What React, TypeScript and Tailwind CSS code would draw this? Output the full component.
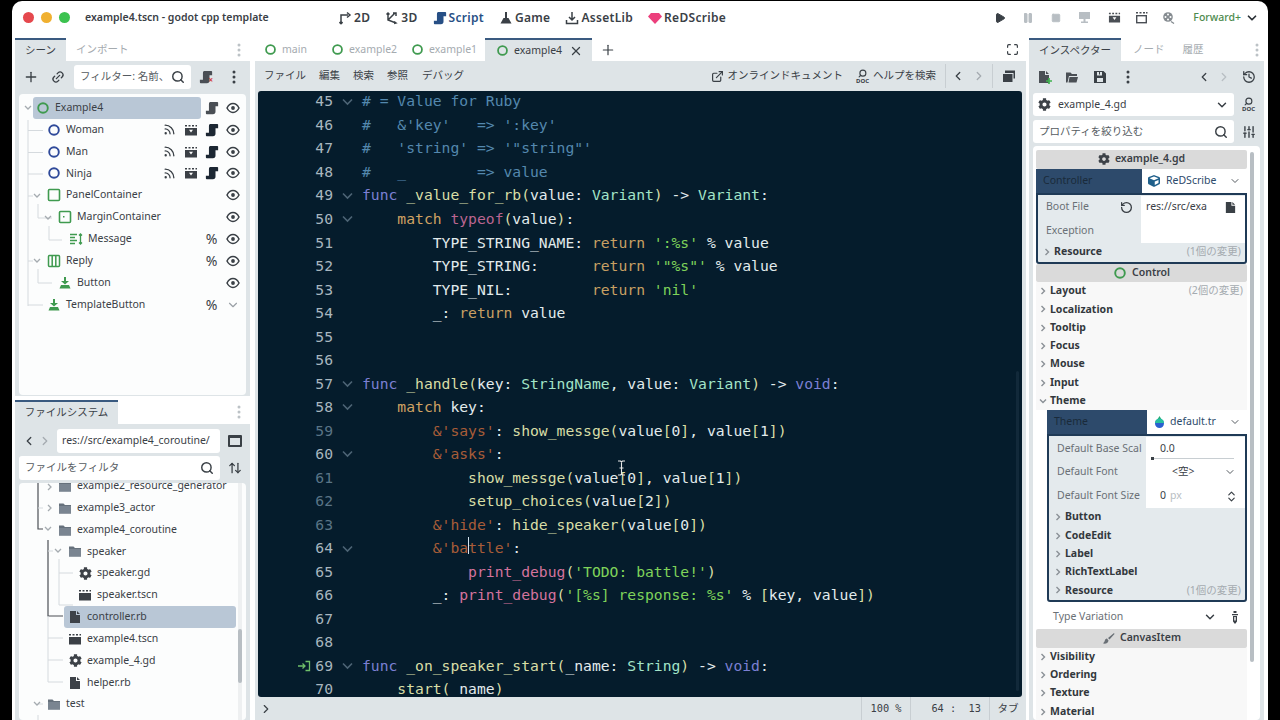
import React from 'react';
import { FaCog, FaCube } from 'react-icons/fa';
import { Plus, Link2, Search, ChevronDown, ChevronLeft, ChevronRight, X, Rss, Play, Pause, Square, RotateCcw, History, ExternalLink, Maximize, ChevronsUpDown, ArrowUpDown, SlidersVertical } from 'lucide-react';

const ui = "font-['Noto_Sans','Noto_Sans_CJK_JP',sans-serif]";

const Ring = ({ c = '#3f9a4f', s = 14 }: { c?: string; s?: number }) => (
  <svg width={s} height={s} viewBox="0 0 14 14" className="shrink-0"><circle cx="7" cy="7" r="4.8" fill="none" stroke={c} strokeWidth="1.9" /></svg>
);
const ScriptIcon = ({ c = '#1c2733', s = 14 }: { c?: string; s?: number }) => (
  <svg width={s} height={s} viewBox="0 0 16 16" className="shrink-0"><path fill={c} d="M6 1h8a1 1 0 0 1 1 1v4h-3v6a3 3 0 0 1-3 3H2a1 1 0 0 1-1-1v-3h3.5V3A2 2 0 0 1 6 1z" /></svg>
);
const EyeIcon = () => (
  <svg width="14" height="14" viewBox="0 0 14 14" className="shrink-0"><path d="M1 7c1.5-3 3.5-4.4 6-4.4S11.500 4 13 7c-1.500 3-3.500 4.400-6 4.400S2.500 10 1 7z" fill="none" stroke="#3a4046" strokeWidth="1.500" /><circle cx="7" cy="7" r="1.900" fill="#3a4046" /></svg>
);
const Clapper = ({ c = '#3b4046', s = 14, play = true }: { c?: string; s?: number; play?: boolean }) => (
  <svg width={s} height={s} viewBox="0 0 14 14" className="shrink-0">
    <path fill={c} d="M1 2h2v1.500H1zM4.500 2h2v1.500h-2zM8 2h2v1.500H8zM11.500 2h1.500v1.500h-1.500zM1 5h12v7.500H1z" />
    {play && <path fill="#fff" d="M5 6.800h4l-2 2.800z" />}
  </svg>
);
const FolderIcon = () => (
  <svg width="14" height="14" viewBox="0 0 14 14" className="shrink-0"><path fill="#66717c" d="M1 2.500h4.500L7 4h6v8.500H1z" /><path fill="#7a8591" d="M1 5h12v7.500H1z" /></svg>
);
const FileIcon = ({ c = '#3d4248', s = 14 }: { c?: string; s?: number }) => (
  <svg width={s} height={s} viewBox="0 0 14 14" className="shrink-0"><path fill={c} d="M2 1h6v4h4v8H2zM9 1l3 3H9z" /></svg>
);
const Gear = ({ s = 13, c = '#3d4248' }: { s?: number; c?: string }) => <FaCog size={s} color={c} className="shrink-0" />;
const Vd = () => (
  <svg width="4" height="14" viewBox="0 0 4 14" className="shrink-0"><circle cx="2" cy="2" r="1.500" fill="#bcc2c6" /><circle cx="2" cy="7" r="1.500" fill="#bcc2c6" /><circle cx="2" cy="12" r="1.500" fill="#bcc2c6" /></svg>
);
const VdDark = () => (
  <svg width="4" height="14" viewBox="0 0 4 14" className="shrink-0"><circle cx="2" cy="2" r="1.500" fill="#3a4046" /><circle cx="2" cy="7" r="1.500" fill="#3a4046" /><circle cx="2" cy="12" r="1.500" fill="#3a4046" /></svg>
);
const Caret = ({ open = false }: { open?: boolean }) => (
  <svg width="8" height="8" viewBox="0 0 8 8" className="shrink-0">{open ? <path d="M1 2.500 4 5.500 7 2.500" fill="none" stroke="#8a9096" strokeWidth="1.400" /> : <path d="M2.500 1 5.500 4 2.500 7" fill="none" stroke="#8a9096" strokeWidth="1.400" />}</svg>
);
const BoxIcon = ({ dot = false }: { dot?: boolean }) => (
  <svg width="14" height="14" viewBox="0 0 14 14" className="shrink-0"><rect x="1.500" y="1.500" width="11" height="11" rx="1" fill="none" stroke="#3f9a4f" strokeWidth="1.600" />{dot && <rect x="5" y="6" width="1.500" height="1.500" fill="#3f9a4f" />}</svg>
);
const MsgIcon = () => (
  <svg width="14" height="14" viewBox="0 0 14 14" className="shrink-0"><path d="M1 2.500h7M1 5.500h5M1 8.500h7M1 11.500h5M11.500 2v10M10 3.500l1.500-1.500 1.500 1.500M10 10.500l1.500 1.500 1.500-1.500" stroke="#3f9a4f" strokeWidth="1.300" fill="none" /></svg>
);
const HBoxIcon = () => (
  <svg width="14" height="14" viewBox="0 0 14 14" className="shrink-0"><rect x="1.500" y="1.500" width="11" height="11" rx="1" fill="none" stroke="#3f9a4f" strokeWidth="1.500" /><path d="M5.200 2v10M8.800 2v10" stroke="#3f9a4f" strokeWidth="1.500" /></svg>
);
const BtnIcon = () => (
  <svg width="14" height="14" viewBox="0 0 14 14" className="shrink-0"><path fill="#3f9a4f" d="M6 1h2v4h3L7 8.500 3 5h3zM3 9h8l1.500 3.500h-11z" /></svg>
);

type SRow = { name: string; pad: string; icon: React.ReactNode; slots: React.ReactNode[]; sel?: boolean; };
const eye = <EyeIcon />;
const pct = <span className="text-[14px] leading-none text-[#3a4046]">%</span>;
const rss = <Rss size={13} color="#3a4046" strokeWidth={2.400} />;
const clap = <Clapper />;
const scr = <ScriptIcon />;
const sceneRows: SRow[] = [
  { name: 'Example4', pad: 'pl-[3px]', icon: <Ring />, slots: [<ScriptIcon c="#4a4f55" />, eye], sel: true },
  { name: 'Woman', pad: 'pl-[28px]', icon: <Ring c="#2f4a9a" />, slots: [rss, clap, scr, eye] },
  { name: 'Man', pad: 'pl-[28px]', icon: <Ring c="#2f4a9a" />, slots: [rss, clap, scr, eye] },
  { name: 'Ninja', pad: 'pl-[28px]', icon: <Ring c="#2f4a9a" />, slots: [rss, clap, scr, eye] },
  { name: 'PanelContainer', pad: 'pl-[28px]', icon: <BoxIcon />, slots: [null, null, null, eye] },
  { name: 'MarginContainer', pad: 'pl-[39px]', icon: <BoxIcon dot />, slots: [null, null, null, eye] },
  { name: 'Message', pad: 'pl-[50px]', icon: <MsgIcon />, slots: [null, null, pct, eye] },
  { name: 'Reply', pad: 'pl-[28px]', icon: <HBoxIcon />, slots: [null, null, pct, eye] },
  { name: 'Button', pad: 'pl-[39px]', icon: <BtnIcon />, slots: [null, null, null, eye] },
  { name: 'TemplateButton', pad: 'pl-[28px]', icon: <BtnIcon />, slots: [null, null, pct, <ChevronDown size={14} color="#9aa0a6" />] },
];

const SceneTree = () => (
  <div className="relative h-[301px] mx-1 mt-[2px] bg-[#fcfdfd] rounded-sm overflow-hidden">
    <svg width="229" height="301" viewBox="0 0 229 301" className="absolute left-0 top-0" fill="none">
      <path d="M9 26V212M9 36.500H24M9 58.500H24M9 80H24M9 102H14M9 167H14M9 211H24M19 110V124H33M30 132V146H43M19 175V189H33" stroke="#d5dade" strokeWidth="1" />
      <path d="M6 12l3 3 3-3M15 100l3 3 3-3M26 122l3 3 3-3M15 165l3 3 3-3" stroke="#a5abb0" strokeWidth="1.300" />
    </svg>
    <div className="relative pt-[3px]">
      {sceneRows.map((r) => (
        <div key={r.name} className={`flex items-center h-[21.850px] pr-[3px] ${r.sel ? 'pl-[14px]' : r.pad}`}>
          <div className={`flex items-center flex-1 min-w-0 h-full gap-[5px] ${r.sel ? 'bg-[#b9c7d6] rounded-[3px] pl-[3px]' : ''}`}>
            {r.icon}
            <span className="text-[10.500px] text-[#3a4046]">{r.name}</span>
          </div>
          {r.slots.map((s, i) => (
            <div key={i} className="w-[21px] flex items-center justify-center shrink-0">{s}</div>
          ))}
        </div>
      ))}
    </div>
  </div>
);

type FRow = { name: string; pad: string; icon: React.ReactNode; sel?: boolean };
const fileRows: FRow[] = [
  { name: 'example2_resource_generator', pad: 'pl-[39px]', icon: <FolderIcon /> },
  { name: 'example3_actor', pad: 'pl-[39px]', icon: <FolderIcon /> },
  { name: 'example4_coroutine', pad: 'pl-[39px]', icon: <FolderIcon /> },
  { name: 'speaker', pad: 'pl-[49px]', icon: <FolderIcon /> },
  { name: 'speaker.gd', pad: 'pl-[60px]', icon: <Gear /> },
  { name: 'speaker.tscn', pad: 'pl-[59px]', icon: <Clapper play={false} /> },
  { name: 'controller.rb', pad: 'pl-[49px]', icon: <FileIcon />, sel: true },
  { name: 'example4.tscn', pad: 'pl-[49px]', icon: <Clapper play={false} /> },
  { name: 'example_4.gd', pad: 'pl-[50px]', icon: <Gear /> },
  { name: 'helper.rb', pad: 'pl-[49px]', icon: <FileIcon /> },
  { name: 'test', pad: 'pl-[28px]', icon: <FolderIcon /> },
];
const FileTree = () => (
  <div className="relative flex-1 min-h-0 mx-1 mt-[3px] bg-[#fcfdfd] rounded-sm overflow-hidden">
    <div className="relative -mt-[8px]">
      {fileRows.map((r) => (
        <div key={r.name} className={`flex items-center h-[21.850px] ${r.sel ? 'pl-[45px]' : r.pad}`}>
          <div className={`flex items-center h-full gap-[5px] ${r.sel ? 'bg-[#b9c7d6] rounded-[3px] w-[172px] pl-[4px]' : ''}`}>
            {r.icon}
            <span className="text-[10.500px] text-[#3a4046] whitespace-nowrap">{r.name}</span>
          </div>
        </div>
      ))}
    </div>
    <svg width="229" height="237" viewBox="0 0 229 237" className="absolute left-0 top-0" fill="none">
      <path d="M19 0V46H24M29 57V133H44" stroke="#4a4f55" strokeWidth="1.200" />
      <path d="M19 25H24M29 68H34M40 76V122H54M40 90H54M29 155H44M29 133V199H44M29 177H44M19 221H24M19 232V237" stroke="#d5dade" strokeWidth="1" />
      <path d="M29 1l3 3-3 3M29 22l3 3-3 3M26 44l3 3 3-3M36 66l3 3 3-3M15 219l3 3 3-3" stroke="#a5abb0" strokeWidth="1.300" />
    </svg>
    <div className="absolute right-[4px] top-[146px] w-[4px] h-[54px] rounded bg-[#b8bec3]" />
    <div className="absolute right-[4px] top-0 bottom-0 w-[4px] bg-[#b8bec3]/20" />
  </div>
);

const C = {
  cm: 'text-[#5488ae]', kw: 'text-[#7c80d4]', fn: 'text-[#d8dea6]', tx: 'text-[#e2ebec]', ty: 'text-[#a3e4c8]', ct: 'text-[#d0a263]',
  bi: 'text-[#bb6590]', st: 'text-[#7fd35a]', sn: 'text-[#a85c38]', pk: 'text-[#d4739d]', or: 'text-[#c9a063]',
};
type T = [string, string];
const L: { n: number; dim?: boolean; fold?: boolean; mark?: boolean; t: T[]; caret?: boolean }[] = [
  { n: 45, fold: true, t: [[C.cm, "# = Value for Ruby"]] },
  { n: 46, t: [[C.cm, "#   &'key'   => ':key'"]] },
  { n: 47, t: [[C.cm, `#   'string' => '"string"'`]] },
  { n: 48, t: [[C.cm, "#   _        => value"]] },
  { n: 49, fold: true, t: [[C.kw, 'func '], [C.fn, '_value_for_rb'], [C.tx, '(value: '], [C.ty, 'Variant'], [C.tx, ') -> '], [C.ty, 'Variant'], [C.tx, ':']] },
  { n: 50, fold: true, t: [[C.ct, '    match '], [C.bi, 'typeof'], [C.tx, '(value):']] },
  { n: 51, t: [[C.tx, '        TYPE_STRING_NAME: '], [C.or, 'return '], [C.st, "':%s'"], [C.tx, ' % value']] },
  { n: 52, t: [[C.tx, '        TYPE_STRING:      '], [C.or, 'return '], [C.st, `'"%s"'`], [C.tx, ' % value']] },
  { n: 53, t: [[C.tx, '        TYPE_NIL:         '], [C.or, 'return '], [C.st, "'nil'"]] },
  { n: 54, t: [[C.tx, '        _: '], [C.or, 'return '], [C.tx, 'value']] },
  { n: 55, t: [] },
  { n: 56, t: [] },
  { n: 57, fold: true, t: [[C.kw, 'func '], [C.fn, '_handle'], [C.tx, '(key: '], [C.ty, 'StringName'], [C.tx, ', value: '], [C.ty, 'Variant'], [C.tx, ') -> '], [C.kw, 'void'], [C.tx, ':']] },
  { n: 58, fold: true, t: [[C.ct, '    match '], [C.tx, 'key:']] },
  { n: 59, dim: true, t: [[C.sn, "        &'says'"], [C.tx, ': '], [C.fn, 'show_messge'], [C.tx, '(value[0], value[1])']] },
  { n: 60, fold: true, t: [[C.sn, "        &'asks'"], [C.tx, ':']] },
  { n: 61, dim: true, t: [[C.fn, '            show_messge'], [C.tx, '(value[0], value[1])']] },
  { n: 62, dim: true, t: [[C.fn, '            setup_choices'], [C.tx, '(value[2])']] },
  { n: 63, dim: true, t: [[C.sn, "        &'hide'"], [C.tx, ': '], [C.fn, 'hide_speaker'], [C.tx, '(value[0])']] },
  { n: 64, fold: true, caret: true, t: [[C.sn, "ttle'"], [C.tx, ':']] },
  { n: 65, t: [[C.pk, '            print_debug'], [C.tx, '('], [C.st, "'TODO: battle!'"], [C.tx, ')']] },
  { n: 66, t: [[C.tx, '        _: '], [C.pk, 'print_debug'], [C.tx, '('], [C.st, "'[%s] response: %s'"], [C.tx, ' % [key, value])']] },
  { n: 67, t: [] },
  { n: 68, t: [] },
  { n: 69, fold: true, mark: true, t: [[C.kw, 'func '], [C.fn, '_on_speaker_start'], [C.tx, '(_name: '], [C.ty, 'String'], [C.tx, ') -> '], [C.kw, 'void'], [C.tx, ':']] },
  { n: 70, t: [[C.fn, '    start'], [C.tx, '(_name)']] },
];

const Tok = ({ c, t }: { c: string; t: string }) => {
  if (c !== C.tx) return <span className={c}>{t}</span>;
  return (
    <>
      {t.split(/([()\[\]])/).map((p, i) => (
        <span key={i} className={/^[()\[\]]$/.test(p) ? 'text-[#d8dea6]' : c}>{p}</span>
      ))}
    </>
  );
};

const Editor = () => (
  <div className="relative flex-1 min-h-0 bg-[#051c2c] rounded-[3px] overflow-hidden font-['DejaVu_Sans_Mono',monospace] text-[14.700px]">
    <div className="-mt-[1px]">
      {L.map((l) => (
        <div key={l.n} className="flex items-center h-[23.520px] whitespace-pre leading-none">
          <div className={`relative w-[75px] text-right shrink-0 ${l.dim ? 'text-[#5a7486]' : 'text-[#a8b6bf]'}`}>
            {l.mark && (
              <svg width="14" height="12" viewBox="0 0 14 12" className="absolute left-[39px] top-[1px]" fill="none" stroke="#6fbf6a" strokeWidth="1.300"><path d="M1 6h7M5.500 3.500 8 6 5.500 8.500M8.500 1.500H12.500V10.500H8.500" /></svg>
            )}
            {l.n}
          </div>
          <div className="w-[29px] flex justify-center shrink-0">
            {l.fold && <svg width="11" height="8" viewBox="0 0 11 8" fill="none" stroke="#4d6475" strokeWidth="1.600"><path d="M1 1.500 5.500 6 10 1.500" /></svg>}
          </div>
          <div>
            {l.caret && (
              <>
                <span className={C.sn}>{"        &'ba"}</span>
                <span className="relative"><span className="absolute -left-[0.500px] -top-[2px] h-[17px] w-[1px] bg-[#d5e4f0]" /></span>
              </>
            )}
            {l.t.map((s, i) => <Tok key={i} c={s[0]} t={s[1]} />)}
          </div>
        </div>
      ))}
    </div>
    <div className="absolute right-[3px] top-[280px] h-[320px] w-[3px] rounded bg-[#12293a]" />
    <svg width="9" height="16" viewBox="0 0 9 16" className="absolute left-[359px] top-[369px]" fill="none" stroke="#e8e8e8" strokeWidth="1.100"><path d="M1 1h2.500L4.500 2l1-1H8M4.500 2v12M1 15h2.500l1-1 1 1H8M2.500 8h4" /></svg>
  </div>
);

const NavBtn = ({ icon, label, cls = 'text-[#3a4046]' }: { icon: React.ReactNode; label: string; cls?: string }) => (
  <div className={`flex items-center gap-[2px] font-semibold text-[12px] tracking-[0.300px] ${cls}`}>{icon}<span>{label}</span></div>
);

const TopBar = () => (
  <div className="relative flex items-center h-[37px] pb-[4px] shrink-0">
    <div className="flex items-center gap-[7px] pl-[8px]">
      <span className="w-[11px] h-[11px] rounded-full bg-[#e5484d]" />
      <span className="w-[11px] h-[11px] rounded-full bg-[#f0b030]" />
      <span className="w-[11px] h-[11px] rounded-full bg-[#3cc24f]" />
    </div>
    <span className="ml-[15px] w-[253px] text-[10.500px] font-semibold text-[#3a4046] whitespace-nowrap">example4.tscn - godot cpp template</span>
    <div className="flex items-center gap-[15px]">
      <NavBtn label="2D" icon={<svg width="14" height="14" viewBox="0 0 14 14" fill="none" stroke="#3a4046" strokeWidth="1.500"><path d="M3 13V4h7M3 13l-1.500-2M3 13l1.500-2M9 1.500 12 4 9 6.500" /></svg>} />
      <NavBtn label="3D" icon={<svg width="14" height="14" viewBox="0 0 14 14" fill="none" stroke="#3a4046" strokeWidth="1.500"><path d="M3 2v7l8 3M1.500 3.500 3 2l1.500 1.500M3 9l7-7M8 2h3v3M9 10.500l2 1.500-2 .5" /></svg>} />
      <NavBtn label="Script" cls="text-[#274f85]" icon={<ScriptIcon c="#274f85" />} />
      <NavBtn label="Game" icon={<svg width="14" height="14" viewBox="0 0 14 14"><path fill="#3a4046" d="M6 1h2v6h1.500l3 5.500h-11l3-5.500H6z" /></svg>} />
      <NavBtn label="AssetLib" icon={<svg width="14" height="14" viewBox="0 0 14 14" fill="none" stroke="#3a4046" strokeWidth="1.500"><path d="M7 1v8M4 6l3 3 3-3M1.500 9v3.500h11V9" /></svg>} />
      <NavBtn label="ReDScribe" icon={<svg width="14" height="14" viewBox="0 0 14 14"><path fill="#ec3f7c" d="M3 2h8l3 3.500L7 13 0 5.500z" /></svg>} />
    </div>
    <div className="flex items-center ml-auto pr-[9px]">
      <div className="w-[28px] flex justify-center"><Play size={12} fill="#3a4046" color="#3a4046" /></div>
      <div className="w-[28px] flex justify-center"><Pause size={12} fill="#b8bec3" color="#b8bec3" /></div>
      <div className="w-[28px] flex justify-center"><Square size={10} fill="#b8bec3" color="#b8bec3" /></div>
      <div className="w-[28px] flex justify-center"><svg width="13" height="13" viewBox="0 0 13 13"><path fill="#b8bec3" d="M1 1h11v7H1zM5.500 8h2v2.500H10V12H3v-1.500h2.500z" /></svg></div>
      <div className="ml-[1px] w-[30px] flex justify-center"><Clapper c="#4a4f55" s={13} /></div>
      <div className="w-[24px] flex justify-center"><svg width="13" height="13" viewBox="0 0 13 13"><path fill="#4a4f55" d="M1 1h2v1.500H1zM4.500 1h2v1.500h-2zM8 1h2v1.500H8zM11 1h1.500v1.500H11z" /><rect x="1.700" y="4.700" width="9.600" height="7" fill="none" stroke="#4a4f55" strokeWidth="1.400" /></svg></div>
      <div className="w-[30px] flex justify-center"><svg width="13" height="13" viewBox="0 0 13 13"><circle cx="6" cy="6" r="4.800" fill="#858b90" /><circle cx="6" cy="3.500" r="1" fill="#fff" /><circle cx="6" cy="8.500" r="1" fill="#fff" /><circle cx="3.500" cy="6" r="1" fill="#fff" /><circle cx="8.500" cy="6" r="1" fill="#fff" /><path d="M9 10.500l3 2" stroke="#858b90" strokeWidth="1.300" /></svg></div>
      <span className="ml-[10px] text-[10.500px] font-medium text-[#4d8a4d]">Forward+</span>
      <ChevronDown size={14} color="#2a3036" strokeWidth={3} className="ml-[4px]" />
    </div>
  </div>
);

const Tab = ({ label, active, cls = '' }: { label: string; active?: boolean; cls?: string }) => (
  <div className={`h-full flex items-center text-[10.500px] ${active ? 'bg-[#dee4e7] border-t-2 border-[#3a5a80] text-[#3a4046]' : 'text-[#a5abb0]'} ${cls}`}>{label}</div>
);

const Field = ({ text, cls }: { text: string; cls: string }) => (
  <div className={`flex items-center justify-between bg-white rounded-[3px] text-[10.500px] text-[#555b61] whitespace-nowrap overflow-hidden ${cls}`}>
    <span>{text}</span>
    <Search size={14} color="#3a4046" strokeWidth={2.500} className="shrink-0" />
  </div>
);

const DocIcon = () => (
  <span className="flex flex-col items-center leading-none text-[#3a4046]"><Search size={9} strokeWidth={3} className="-scale-x-100" /><span className="text-[6px] font-bold">DOC</span></span>
);

const LeftDock = () => (
  <div className="w-[235px] shrink-0 flex flex-col">
    <div className="flex items-center h-[23px] shrink-0">
      <Tab label="シーン" active cls="w-[51px] justify-center" />
      <Tab label="インポート" cls="ml-[10px]" />
      <div className="ml-auto mr-[9px]"><Vd /></div>
    </div>
    <div className="h-[335px] shrink-0 bg-[#dee4e7] flex flex-col">
      <div className="flex items-center h-[31px] shrink-0 pl-[8px]">
        <Plus size={16} color="#3a4046" strokeWidth={2} />
        <Link2 size={14} color="#3a4046" strokeWidth={2.200} className="ml-[12px] -rotate-45" />
        <Field text="フィルター: 名前、" cls="ml-[9px] w-[117px] h-[24px] pl-[6px] pr-[6px]" />
        <span className="ml-[8px] relative"><ScriptIcon c="#4a4f55" /><span className="absolute right-0 bottom-0 text-[8px] leading-none text-[#d03a3a] font-bold">×</span></span>
        <span className="ml-[19px]"><VdDark /></span>
      </div>
      <SceneTree />
    </div>
    <div className="h-[4px] shrink-0" />
    <div className="flex items-center h-[24px] shrink-0">
      <Tab label="ファイルシステム" active cls="w-[103px] justify-center" />
      <div className="ml-auto mr-[9px]"><Vd /></div>
    </div>
    <div className="flex-1 min-h-0 bg-[#dee4e7] flex flex-col">
      <div className="flex items-center h-[24px] mt-[5px] shrink-0 pl-[7px]">
        <ChevronLeft size={14} color="#3a4046" strokeWidth={2.200} />
        <ChevronRight size={14} color="#a5abb0" strokeWidth={2.200} className="ml-[2px]" />
        <div className="ml-[5px] w-[163px] h-full bg-white rounded-[3px] flex items-center pl-[5px] text-[10.500px] text-[#3a4046] whitespace-nowrap overflow-hidden">res://src/example4_coroutine/</div>
        <div className="ml-[8px] w-[14px] h-[12px] border-2 border-t-[3px] border-[#3a4046] rounded-[1px]" />
      </div>
      <div className="flex items-center h-[24px] mt-[3px] shrink-0 pl-[4px]">
        <Field text="ファイルをフィルタ" cls="w-[201px] h-[24px] pl-[6px] pr-[6px]" />
        <ArrowUpDown size={14} color="#3a4046" strokeWidth={2.200} className="ml-[8px]" />
      </div>
      <FileTree />
    </div>
  </div>
);

const CenterTab = ({ label, cls = '' }: { label: string; cls?: string }) => (
  <div className={`flex items-center gap-[5px] text-[10.500px] text-[#a5abb0] ${cls}`}><Ring s={13} /><span>{label}</span></div>
);

const Center = () => (
  <div className="flex-1 min-w-0 flex flex-col ml-[5px]">
    <div className="flex items-center h-[23px] shrink-0 pl-[9px]">
      <CenterTab label="main" cls="w-[67px]" />
      <CenterTab label="example2" cls="w-[80px]" />
      <CenterTab label="example1" cls="w-[74px]" />
      <div className="h-full w-[107px] bg-[#dee4e7] border-t-2 border-[#3a5a80] flex items-center pl-[11px] gap-[5px] text-[10.500px] text-[#3a4046]"><Ring s={13} /><span>example4</span><X size={14} color="#3a4046" strokeWidth={2.200} className="ml-[2px]" /></div>
      <Plus size={16} color="#3a4046" strokeWidth={1.800} className="ml-[8px]" />
      <Maximize size={13} color="#3a4046" strokeWidth={2.200} className="ml-auto mr-[7px]" />
    </div>
    <div className="flex-1 min-h-0 bg-[#dee4e7] flex flex-col">
      <div className="flex items-center h-[30px] shrink-0 pl-[9px] pr-[10px] text-[10.500px] text-[#3a4046]">
        <span>ファイル</span>
        <span className="ml-[13px]">編集</span>
        <span className="ml-[13px]">検索</span>
        <span className="ml-[13px]">参照</span>
        <span className="ml-[14px]">デバッグ</span>
        <div className="ml-auto flex items-center h-full">
          <ExternalLink size={13} color="#3a4046" strokeWidth={2.200} />
          <span className="ml-[4px]">オンラインドキュメント</span>
          <span className="ml-[13px]"><DocIcon /></span>
          <span className="ml-[4px]">ヘルプを検索</span>
          <span className="ml-[9px] w-px h-[24px] bg-[#c8ced2]" />
          <ChevronLeft size={14} color="#3a4046" strokeWidth={2.200} className="ml-[5px]" />
          <ChevronRight size={14} color="#a5abb0" strokeWidth={2.200} className="ml-[7px]" />
          <span className="ml-[6px] w-px h-[24px] bg-[#c8ced2]" />
          <svg width="14" height="14" viewBox="0 0 14 14" className="ml-[9px]"><path fill="#3a4046" d="M3 1.500h10v8h-1.500V4H3zM1 5h9.500v8H1z" /></svg>
        </div>
      </div>
      <div className="flex-1 min-h-0 ml-[3px] mr-[4px] flex flex-col">
        <Editor />
      </div>
      <div className="flex items-center h-[23px] shrink-0 text-[#3a4046] font-['DejaVu_Sans_Mono',monospace]">
        <ChevronRight size={14} color="#3a4046" className="ml-[4px]" />
        <div className="ml-auto flex items-center h-full">
          <span className="w-px h-full bg-[#c8ced2]" />
          <span className="w-[48px] text-center whitespace-pre text-[10.300px]">100 %</span>
          <span className="w-px h-full bg-[#c8ced2]" />
          <span className="w-[78px] text-right pr-[8px] whitespace-pre text-[10.300px]">64 :  13</span>
          <span className="w-px h-full bg-[#c8ced2]" />
          <span className={`w-[36px] text-center text-[10.500px] ${ui}`}>タブ</span>
        </div>
      </div>
    </div>
  </div>
);

const Sect = ({ label, icon }: { label: string; icon: React.ReactNode }) => (
  <div className="flex items-center justify-center gap-[5px] h-[18.500px] bg-[#dadada] rounded-[2px] text-[10.500px] font-semibold text-[#3a4046]">{icon}<span>{label}</span></div>
);
const Cat = ({ label, open, note, ind = 'pl-[3px]' }: { label: string; open?: boolean; note?: string; ind?: string }) => (
  <div className={`flex items-center h-[18.300px] gap-[2px] ${ind}`}>
    <Caret open={open} />
    <span className="ml-[1px] text-[10.500px] font-bold text-[#33383d]">{label}</span>
    {note && <span className="ml-auto pr-[4px] text-[10.500px] text-[#a5abb0]">{note}</span>}
  </div>
);

const Inspector = () => (
  <div className="w-[235px] shrink-0 flex flex-col mr-[4px] ml-[3px]">
    <div className="flex items-center h-[23px] shrink-0">
      <Tab label="インスペクター" active cls="w-[92px] justify-center" />
      <Tab label="ノード" cls="ml-[12px]" />
      <Tab label="履歴" cls="ml-[18px]" />
      <div className="ml-auto mr-[5px]"><Vd /></div>
    </div>
    <div className="flex-1 min-h-0 bg-[#dee4e7] flex flex-col">
      <div className="flex items-center h-[31px] mb-[1px] shrink-0 pl-[8px]">
        <span className="relative">
          <FileIcon c="#4a4f55" />
          <svg width="6" height="6" viewBox="0 0 7 7" className="absolute -right-[1px] bottom-0"><path d="M3.500 0v7M0 3.500h7" stroke="#3fb24f" strokeWidth="2" /></svg>
        </span>
        <svg width="14" height="14" viewBox="0 0 14 14" className="ml-[14px]"><path fill="#4a4f55" d="M1 2.500h4.500L7 4h5v2H4L2.500 12.500H1zM4.500 7H13l-1.500 5.500h-8z" /></svg>
        <svg width="14" height="14" viewBox="0 0 14 14" className="ml-[14px]"><path fill="#3a4046" fillRule="evenodd" d="M1 1h9.500L13 3.500V13H1zM4 2v3.500h5V2h-2v2.500H6V2zM4 8v4h6V8z" /></svg>
        <span className="ml-[19px]"><VdDark /></span>
        <ChevronLeft size={14} color="#3a4046" strokeWidth={2.200} className="ml-[67px]" />
        <ChevronRight size={14} color="#b8bec3" strokeWidth={2.200} className="ml-[6px]" />
        <History size={14} color="#3a4046" strokeWidth={2.200} className="ml-[11px]" />
      </div>
      <div className="flex items-center h-[23px] shrink-0 pl-[4px]">
        <div className="w-[201px] h-full bg-white rounded-[3px] flex items-center px-[5px] text-[10.500px] text-[#3a4046] gap-[7px]">
          <Gear s={13} /><span>example_4.gd</span>
          <ChevronDown size={14} color="#3a4046" strokeWidth={2.500} className="ml-auto" />
        </div>
        <span className="ml-[8px]"><DocIcon /></span>
      </div>
      <div className="flex items-center h-[23px] mt-[4px] shrink-0 pl-[4px]">
        <Field text="プロパティを絞り込む" cls="w-[201px] h-[23px] pl-[6px] pr-[6px]" />
        <SlidersVertical size={14} color="#3a4046" strokeWidth={2.400} className="ml-[8px]" />
      </div>
      <div className="relative flex-1 min-h-0 mx-[4px] mt-[3px] bg-white rounded-sm overflow-hidden pt-[4px] pl-[3px] pr-[13px]">
        <div className="absolute right-[6px] top-[6px] w-[4px] h-[510px] rounded bg-[#b8bec3]" />
        <Sect label="example_4.gd" icon={<Gear s={12} />} />
        <div className="flex h-[24px]">
          <div className="w-[106px] bg-[#2d4a6b] flex items-center pl-[7px] text-[10.500px] text-[#1a2a3a]">Controller</div>
          <div className="flex-1 flex items-center pl-[6px] pr-[6px] gap-[6px] text-[10.500px] text-[#2d4a6b]"><FaCube size={12} color="#1f5f8a" />ReDScribe<ChevronDown size={12} color="#555b61" className="ml-auto" /></div>
        </div>
        <div className="border-2 border-t-2 border-[#1f3a56] rounded-b-[3px] bg-[#e4eaed] h-[71px] pt-[1px]">
          <div className="flex h-[47px]">
            <div className="w-[103px] text-[10.500px] text-[#6a7076] pl-[8px]">
              <div className="flex items-center h-[23px] justify-between pr-[8px]"><span>Boot File</span><RotateCcw size={13} color="#3a4046" strokeWidth={2.400} /></div>
              <div className="flex items-center h-[24px]">Exception</div>
            </div>
            <div className="flex-1 bg-white">
              <div className="flex items-center h-[23px] pl-[5px] pr-[8px] text-[10.500px] text-[#3a4046] justify-between"><span>res://src/exa</span><FileIcon c="#3a4046" s={13} /></div>
            </div>
          </div>
          <Cat label="Resource" note="(1個の変更)" ind="pl-[5px]" />
        </div>
        <Sect label="Control" icon={<Ring />} />
        <div className="bg-[#f8f8f8]">
          <Cat label="Layout" note="(2個の変更)" />
          <Cat label="Localization" />
          <Cat label="Tooltip" />
          <Cat label="Focus" />
          <Cat label="Mouse" />
          <Cat label="Input" />
          <Cat label="Theme" open />
        </div>
        <div className="pl-[11px]">
          <div className="flex h-[24px]">
            <div className="w-[100px] bg-[#2d4a6b] flex items-center pl-[7px] text-[10.500px] text-[#1a2a3a]">Theme</div>
            <div className="flex-1 flex items-center pl-[7px] pr-[6px] gap-[5px] text-[10.500px] text-[#2d4a6b]">
              <svg width="11" height="13" viewBox="0 0 11 13"><path fill="#27a870" d="M5.500 0 9 6H2z" /><circle cx="5.500" cy="7.500" r="4.500" fill="#2a60d0" /><path fill="#27c0a0" d="M1 7a4.500 4.500 0 0 1 9 0z" /></svg>
              default.tr<ChevronDown size={12} color="#555b61" className="ml-auto" />
            </div>
          </div>
          <div className="border-2 border-[#1f3a56] rounded-b-[3px] bg-[#e4eaed] h-[168px] pt-[1px]">
            <div className="flex h-[71px]">
              <div className="w-[97px] text-[10.500px] text-[#6a7076] pl-[8px] whitespace-nowrap overflow-hidden">
                <div className="flex items-center h-[23.500px]">Default Base Scal</div>
                <div className="flex items-center h-[23.500px]">Default Font</div>
                <div className="flex items-center h-[24px]">Default Font Size</div>
              </div>
              <div className="flex-1 bg-white text-[10.500px] text-[#3a4046]">
                <div className="relative flex items-center h-[23.500px] pl-[14px]">0.0
                  <span className="absolute left-[5px] right-[11px] bottom-[2px] h-px bg-[#c8ced2]" />
                  <span className="absolute left-[5px] bottom-[1px] w-[3px] h-[3px] bg-[#3a4046]" />
                </div>
                <div className="flex items-center h-[23.500px] pr-[9px]"><span className="ml-[26px]">&lt;空&gt;</span><ChevronDown size={12} color="#555b61" className="ml-auto" /></div>
                <div className="flex items-center h-[24px] pl-[14px] pr-[7px]">0<span className="ml-[4px] text-[#b8bec3]">px</span><ChevronsUpDown size={13} color="#3a4046" strokeWidth={2.200} className="ml-auto" /></div>
              </div>
            </div>
            <div>
              <Cat label="Button" ind="pl-[5px]" />
              <Cat label="CodeEdit" ind="pl-[5px]" />
              <Cat label="Label" ind="pl-[5px]" />
              <Cat label="RichTextLabel" ind="pl-[5px]" />
              <Cat label="Resource" note="(1個の変更)" ind="pl-[5px]" />
            </div>
          </div>
        </div>
        <div className="flex items-center h-[27px] pt-[3px] pl-[17px] pr-[9px] text-[10.500px] text-[#6a7076]">
          <span>Type Variation</span>
          <ChevronDown size={14} color="#3a4046" strokeWidth={2.500} className="ml-auto mr-[15px]" />
          <svg width="6" height="13" viewBox="0 0 6 13"><path fill="#3a4046" d="M1.500 0h3v2h-3zM0 3h6v1.200H0zM1 5h4v5.500L3 13l-2-2.500z" /><path fill="#fff" d="M2.300 6h1.400v3.500H2.300z" /></svg>
        </div>
        <Sect label="CanvasItem" icon={<svg width="13" height="13" viewBox="0 0 13 13"><path fill="#6a7076" d="M12 1 6 6 7.500 7.500 12.500 2zM5 6.500c-1.500 0-2 1-2.500 3L1 11.500c2.500.5 5 0 5.500-3z" /></svg>} />
        <div className="bg-[#f8f8f8]">
          <Cat label="Visibility" />
          <Cat label="Ordering" />
          <Cat label="Texture" />
          <Cat label="Material" />
        </div>
      </div>
    </div>
  </div>
);

export default function App() {
  return (
    <div className={`w-[1280px] h-[720px] bg-black overflow-hidden pt-px px-[12px] ${ui}`}>
      <div className="w-full h-[719px] bg-white rounded-t-[10px] flex flex-col overflow-hidden pl-[3px]">
        <TopBar />
        <div className="flex-1 min-h-0 flex">
          <LeftDock />
          <Center />
          <Inspector />
        </div>
      </div>
    </div>
  );
}
